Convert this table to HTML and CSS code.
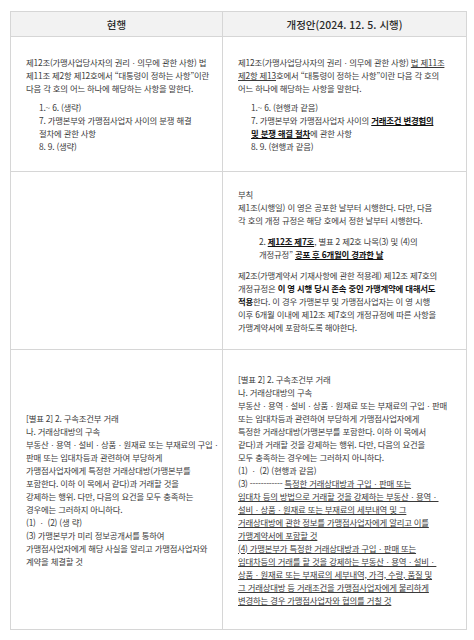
FILE: index.html
```html
<!DOCTYPE html>
<html lang="ko">
<head>
<meta charset="utf-8">
<link rel="stylesheet" href="styles.css">
</head>
<body>
<div class="page">
<table class="cmp">
  <thead>
    <tr><th class="col-l">현행</th><th class="col-r">개정안(2024. 12. 5. 시행)</th></tr>
  </thead>
  <tbody>
    <tr class="r1">
      <td>
        <p class="txt">제12조(가맹사업당사자의 권리ㆍ의무에 관한 사항) 법<br>제11조 제2항 제12호에서 “대통령이 정하는 사항”이란<br>다음 각 호의 어느 하나에 해당하는 사항을 말한다.</p>
        <p class="txt ind">1.~ 6. (생략)<br>7. 가맹본부와 가맹점사업자 사이의 분쟁 해결<br>절차에 관한 사항<br>8. 9. (생략)</p>
      </td>
      <td>
        <p class="txt">제12조(가맹사업당사자의 권리ㆍ의무에 관한 사항) <u>법 제11조</u><br><u>제2항 제13</u>호에서 “대통령이 정하는 사항”이란 다음 각 호의<br>어느 하나에 해당하는 사항을 말한다.</p>
        <p class="txt ind">1.~ 6. (현행과 같음)<br>7. 가맹본부와 가맹점사업자 사이의 <b><u>거래조건 변경협의</u></b><br><b><u>및 분쟁 해결 절차</u></b>에 관한 사항<br>8. 9. (현행과 같음)</p>
      </td>
    </tr>
    <tr class="r2">
      <td></td>
      <td>
        <p class="txt">부칙<br>제1조(시행일) 이 영은 공포한 날부터 시행한다. 다만, 다음<br>각 호의 개정 규정은 해당 호에서 정한 날부터 시행한다.</p>
        <p class="txt ind2">2. <b><u>제12조 제7호</u></b>, 별표 2 제2호 나목(3) 및 (4)의<br>개정규정” <b><u>공포 후 6개월이 경과한 날</u></b></p>
        <p class="txt">제2조(가맹계약서 기재사항에 관한 적용례) 제12조 제7호의<br>개정규정은 <b>이 영 시행 당시 존속 중인 가맹계약에 대해서도</b><br><b>적용</b>한다. 이 경우 가맹본부 및 가맹점사업자는 이 영 시행<br>이후 6개월 이내에 제12조 제7호의 개정규정에 따른 사항을<br>가맹계약서에 포함하도록 해야한다.</p>
      </td>
    </tr>
    <tr class="r3">
      <td>
        <p class="txt">[별표 2] 2. 구속조건부 거래<br>나. 거래상대방의 구속<br>부동산ㆍ용역ㆍ설비ㆍ상품ㆍ원재료 또는 부재료의 구입ㆍ<br>판매 또는 임대차등과 관련하여 부당하게<br>가맹점사업자에게 특정한 거래상대방(가맹본부를<br>포함한다. 이하 이 목에서 같다)과 거래할 것을<br>강제하는 행위. 다만, 다음의 요건을 모두 충족하는<br>경우에는 그러하지 아니하다.<br>(1) ㆍ (2) (생 략)<br>(3) 가맹본부가 미리 정보공개서를 통하여<br>가맹점사업자에게 해당 사실을 알리고 가맹점사업자와<br>계약을 체결할 것</p>
      </td>
      <td>
        <p class="txt">[별표 2] 2. 구속조건부 거래<br>나. 거래상대방의 구속<br>부동산ㆍ용역ㆍ설비ㆍ상품ㆍ원재료 또는 부재료의 구입ㆍ판매<br>또는 임대차등과 관련하여 부당하게 가맹점사업자에게<br>특정한 거래상대방(가맹본부를 포함한다. 이하 이 목에서<br>같다)과 거래할 것을 강제하는 행위. 다만, 다음의 요건을<br>모두 충족하는 경우에는 그러하지 아니하다.<br>(1) ㆍ (2) (현행과 같음)<br>(3) ------------ <u>특정한 거래상대방과 구입ㆍ판매 또는</u><br><u>임대차 등의 방법으로 거래할 것을 강제하는 부동산ㆍ용역ㆍ</u><br><u>설비ㆍ상품ㆍ원재료 또는 부재료의 세부내역 및 그</u><br><u>거래상대방에 관한 정보를 가맹점사업자에게 알리고 이를</u><br><u>가맹계약서에 포함할 것</u><br><u>(4) 가맹본부가 특정한 거래상대방과 구입ㆍ판매 또는</u><br><u>임대차등의 거래를 할 것을 강제하는 부동산ㆍ용역ㆍ설비ㆍ</u><br><u>상품ㆍ원재료 또는 부재료의 세부내역, 가격, 수량, 품질 및</u><br><u>그 거래상대방 등 거래조건을 가맹점사업자에게 불리하게</u><br><u>변경하는 경우 가맹점사업자와 협의를 거칠 것</u></p>
      </td>
    </tr>
  </tbody>
</table>
</div>
</body>
</html>
```

FILE: styles.css
```css
html, body {
  margin: 0;
  padding: 0;
  background: #ffffff;
}
.page {
  padding: 11px 10px 0 10px;
  font-family: "Noto Sans CJK KR", "Noto Sans", sans-serif;
  color: #3a3a3a;
}
.cmp {
  width: 454px;
  border-collapse: collapse;
  table-layout: fixed;
}
.cmp th, .cmp td {
  border: 1px solid #d6d6d6;
}
.cmp th {
  background: #f2f2f2;
  height: 24px;
  padding: 0;
  font-size: 10.5px;
  font-weight: 500;
  color: #2a2a2a;
}
.col-l { width: 211px; }
.col-r { width: 243px; }
.cmp td {
  vertical-align: middle;
  padding: 0 10px 0 15px;
}
.r1 { height: 135px; }
.r2 { height: 178px; }
.r3 { height: 280px; }
.txt {
  margin: 0;
  font-size: 8.4px;
  letter-spacing: -0.2px;
  line-height: 13px;
  white-space: nowrap;
}
.txt + .txt { margin-top: 6px; }
.ind { padding-left: 13px; }
.ind2 { padding-left: 21px; margin-top: 8px !important; margin-bottom: 8px; }
.txt b { font-weight: 700; color: #111; }
.txt u { text-underline-offset: 1px; }
```
